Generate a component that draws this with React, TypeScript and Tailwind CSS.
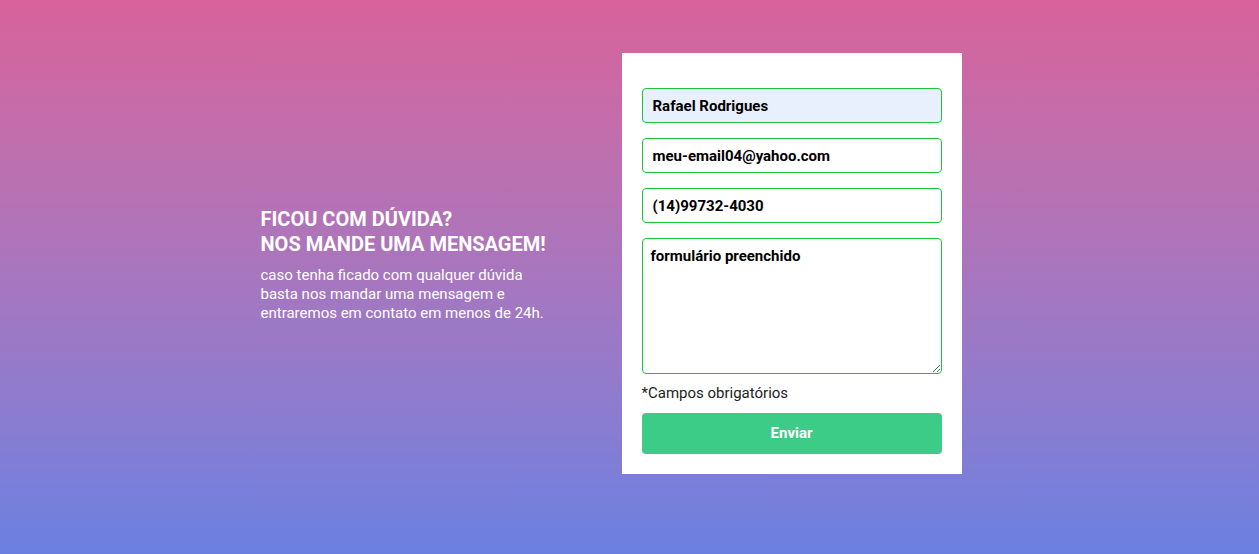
export default function App() {
  return (
    <div
      className="min-h-[554px] w-full bg-gradient-to-b from-[#d8629a] to-[#6a80e1] pt-[53px] pb-[80px]"
      style={{ fontFamily: "Roboto, 'Liberation Sans', sans-serif" }}
    >
      <div className="mx-auto flex w-[740px] items-center">
        <div className="w-[362px] pl-px pt-[3px] text-white">
          <h2 className="text-[20px] font-bold uppercase leading-[25px]">
            Ficou com dúvida?
            <br />
            Nos mande uma mensagem!
          </h2>
          <p className="mt-[9px] w-[290px] text-[15px] leading-[19px] text-white">
            caso tenha ficado com qualquer dúvida basta nos mandar uma mensagem e entraremos em contato em menos de 24h.
          </p>
        </div>

        <form className="flex w-[340px] flex-col bg-white px-[20px] pt-[35px] pb-[20px]">
          <input
            defaultValue="Rafael Rodrigues"
            className="h-[35px] rounded-[4px] border border-[#1ec23c] bg-[#e8f0fe] px-[10px] text-[15px] font-bold text-black outline-none"
          />
          <input
            defaultValue="meu-email04@yahoo.com"
            className="mt-[15px] h-[35px] rounded-[4px] border border-[#1ec23c] bg-white px-[10px] text-[15px] font-bold text-black outline-none"
          />
          <input
            defaultValue="(14)99732-4030"
            className="mt-[15px] h-[35px] rounded-[4px] border border-[#1ec23c] bg-white px-[10px] text-[15px] font-bold text-black outline-none"
          />
          <textarea
            defaultValue="formulário preenchido"
            className="mt-[15px] h-[136px] rounded-[4px] border border-[#1ec23c] bg-white px-[8px] py-[6px] text-[15px] font-bold text-black outline-none"
          />
          <p className="mt-[9px] text-[15px] leading-[20px] text-[#222]">*Campos obrigatórios</p>
          <button
            type="button"
            className="mt-[10px] h-[41px] rounded-[4px] bg-[#3dcc88] text-[15px] font-bold text-white"
          >
            Enviar
          </button>
        </form>
      </div>
    </div>
  )
}
